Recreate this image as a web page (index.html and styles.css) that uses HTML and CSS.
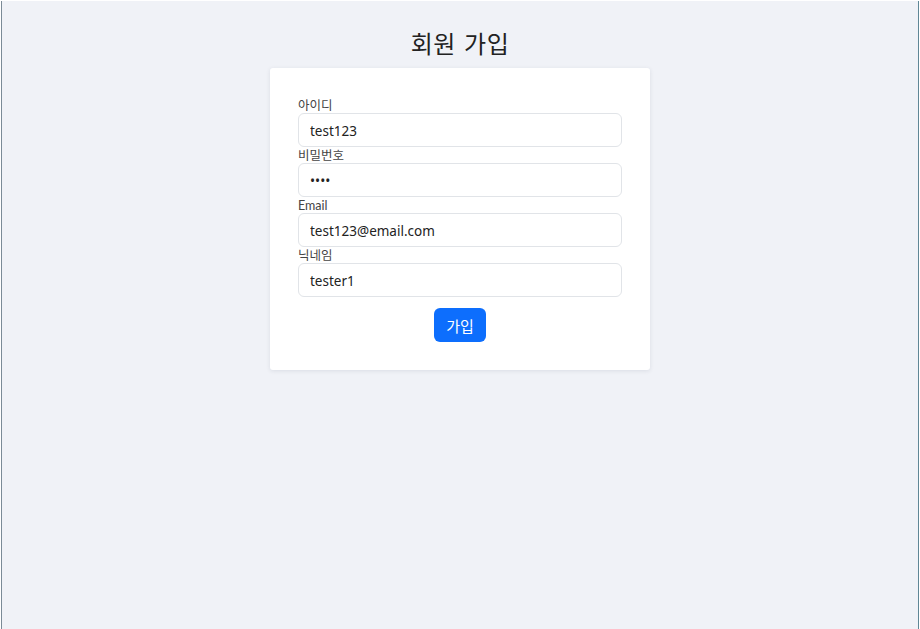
FILE: index.html
```html
<!DOCTYPE html>
<html lang="ko">
<head>
<meta charset="utf-8">
<title>회원 가입</title>
<link rel="stylesheet" href="styles.css">
</head>
<body>
<div class="frame">
  <h1 class="title">회원 가입</h1>
  <form class="card">
    <label class="field">
      <span class="label">아이디</span>
      <input class="input" type="text" value="test123">
    </label>
    <label class="field">
      <span class="label">비밀번호</span>
      <input class="input" type="password" value="1234">
    </label>
    <label class="field">
      <span class="label">Email</span>
      <input class="input" type="email" value="test123@email.com">
    </label>
    <label class="field">
      <span class="label">닉네임</span>
      <input class="input" type="text" value="tester1">
    </label>
    <div class="actions">
      <button class="btn" type="button">가입</button>
    </div>
  </form>
</div>
</body>
</html>
```

FILE: styles.css
```css
* { box-sizing: border-box; }

html, body {
  margin: 0;
  background: #ffffff;
}

body {
  font-family: "Noto Sans", "Noto Sans CJK KR", sans-serif;
  color: #212529;
}

.frame {
  margin: 1px 0 0 1px;
  width: 918px;
  height: 628px;
  background: #f0f2f7;
  border-left: 1px solid #7b8b97;
  border-right: 1px solid #5f8796;
  padding-top: 27px;
  display: flex;
  flex-direction: column;
  align-items: center;
}

.title {
  margin: 0 0 10px;
  font-family: "Noto Sans CJK KR", sans-serif;
  font-size: 24px;
  font-weight: 400;
  line-height: 30px;
  letter-spacing: 0.5px;
  word-spacing: 1px;
  color: #222;
}

.card {
  width: 380px;
  background: #fff;
  border-radius: 3px;
  box-shadow: 0 1px 4px rgba(30, 40, 70, 0.10);
  padding: 29px 28px 28px;
  display: flex;
  flex-direction: column;
}

.field {
  display: flex;
  flex-direction: column;
}

.label {
  font-family: Lato, "Noto Sans CJK KR", sans-serif;
  font-size: 12.5px;
  line-height: 18px;
  margin-bottom: -2px;
  color: #444;
}

.input {
  height: 34px;
  border: 1px solid #e1e4e8;
  border-radius: 6px;
  padding: 2px 11px 0;
  font-family: "Noto Sans", "Noto Sans CJK KR", sans-serif;
  font-size: 13.5px;
  color: #222;
  background: #fff;
  outline: none;
}

.actions {
  display: flex;
  justify-content: center;
  margin-top: 11px;
}

.btn {
  width: 52px;
  height: 34px;
  border: none;
  border-radius: 6px;
  background: #0d6efd;
  color: #fff;
  font-family: "Noto Sans CJK KR", sans-serif;
  font-size: 15px;
  padding: 0;
}
```
